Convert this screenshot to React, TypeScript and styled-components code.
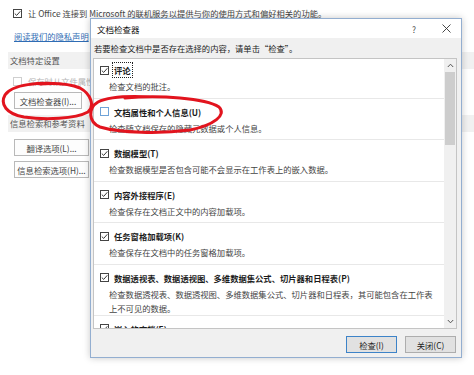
import React from 'react'
import styled, { createGlobalStyle } from 'styled-components'

const GlobalStyle = createGlobalStyle`
  html, body {
    margin: 0;
    padding: 0;
    background: #ffffff;
  }
  body {
    font-family: "Noto Sans CJK SC", "Noto Sans", sans-serif;
    font-size: 8.3px;
    color: #444;
  }
`

type InspectItem = {
  title: string
  desc: string[]
  checked: boolean
  focused?: boolean
  hover?: boolean
}

const items: InspectItem[] = [
  { title: '评论', desc: ['检查文档的批注。'], checked: true, focused: true },
  { title: '文档属性和个人信息(U)', desc: ['检查随文档保存的隐藏元数据或个人信息。'], checked: false, hover: true },
  { title: '数据模型(T)', desc: ['检查数据模型是否包含可能不会显示在工作表上的嵌入数据。'], checked: true },
  { title: '内容外接程序(E)', desc: ['检查保存在文档正文中的内容加载项。'], checked: true },
  { title: '任务窗格加载项(K)', desc: ['检查保存在文档中的任务窗格加载项。'], checked: true },
  {
    title: '数据透视表、数据透视图、多维数据集公式、切片器和日程表(P)',
    desc: ['检查数据透视表、数据透视图、多维数据集公式、切片器和日程表，其可能包含在工作表', '上不可见的数据。'],
    checked: true,
  },
  { title: '嵌入的文档(E)', desc: ['检查嵌入的文档，其中可能包含文件中不可见的信息。'], checked: true },
]

const CheckMark = () => (
  <svg width="7" height="7" viewBox="0 0 7 7">
    <path d="M0.8 3.6 L2.7 5.4 L6.3 1.3" fill="none" stroke="#222" strokeWidth="0.9" />
  </svg>
)

const App = () => {
  return (
    <>
      <GlobalStyle />
      <Page>
        <Options>
          <CheckRow>
            <Box $checked>
              <CheckMark />
            </Box>
            <span>让 Office 连接到 Microsoft 的联机服务以提供与你的使用方式和偏好相关的功能。</span>
          </CheckRow>
          <PrivacyLink>阅读我们的隐私声明</PrivacyLink>
          <SectionBand $top={10}>文档特定设置</SectionBand>
          <CheckRow $disabled>
            <Box $disabled />
            <span>保存时从文件属性中删除个人信息(R)</span>
          </CheckRow>
          <OptButton $w={68} $top={5}>文档检查器(I)...</OptButton>
          <SectionBand $top={6}>信息检索和参考资料</SectionBand>
          <OptButton $w={75} $top={7}>翻译选项(L)...</OptButton>
          <OptButton $w={75} $top={5}>信息检索选项(H)...</OptButton>
        </Options>

        <Dialog>
          <TitleBar>
            <DialogTitle>文档检查器</DialogTitle>
            <HelpGlyph>?</HelpGlyph>
            <svg width="9" height="9" viewBox="0 0 9 9">
              <path d="M0.5 0.5 L8.5 8.5 M8.5 0.5 L0.5 8.5" stroke="#333" strokeWidth="0.9" />
            </svg>
          </TitleBar>
          <Hint>若要检查文档中是否存在选择的内容，请单击“检查”。</Hint>
          <ListFrame>
            <Items>
              {items.map((it) => (
                <Item key={it.title} $lines={it.desc.length}>
                  <ItemHead>
                    <Box $checked={it.checked} $hover={it.hover}>
                      {it.checked && <CheckMark />}
                    </Box>
                    <ItemTitle $focused={it.focused}>{it.title}</ItemTitle>
                  </ItemHead>
                  <ItemDesc>
                    {it.desc.map((line) => (
                      <div key={line}>{line}</div>
                    ))}
                  </ItemDesc>
                </Item>
              ))}
            </Items>
            <ScrollBar>
              <ScrollArrow>
                <svg width="7" height="5" viewBox="0 0 7 5">
                  <path d="M0.8 4 L3.5 1.2 L6.2 4" fill="none" stroke="#555" strokeWidth="1" />
                </svg>
              </ScrollArrow>
              <Thumb />
              <Track />
              <ScrollArrow>
                <svg width="7" height="5" viewBox="0 0 7 5">
                  <path d="M0.8 1 L3.5 3.8 L6.2 1" fill="none" stroke="#555" strokeWidth="1" />
                </svg>
              </ScrollArrow>
            </ScrollBar>
          </ListFrame>
          <Footer>
            <DlgButton $primary>检查(I)</DlgButton>
            <DlgButton>关闭(C)</DlgButton>
          </Footer>
        </Dialog>

        <Marks width="474" height="375" viewBox="0 0 474 375">
          <path
            d="M62 84 C40 82 12 84 5 95 C0 104 6 114 24 117 C45 120 75 119 88 112 C95 106 91 94 80 88 C70 84 55 83 40 84"
            fill="none"
            stroke="#e2141e"
            strokeWidth="3"
            strokeLinecap="round"
          />
          <path
            d="M125 98 C160 95 205 98 219 107 C227 115 214 125 190 130 C160 134 120 133 100 127 C88 122 88 108 98 102 C108 97 130 96 150 97"
            fill="none"
            stroke="#e2141e"
            strokeWidth="3"
            strokeLinecap="round"
          />
        </Marks>
      </Page>
    </>
  )
}

export default App

const Page = styled.div`
  position: relative;
  width: 474px;
  height: 375px;
  overflow: hidden;
  background: #ffffff;
`

const Options = styled.div`
  display: flex;
  flex-direction: column;
  padding: 5px 0 0 8px;
`

const CheckRow = styled.div<{ $disabled?: boolean }>`
  display: flex;
  align-items: center;
  gap: 6px;
  height: ${(p) => (p.$disabled ? 12 : 16)}px;
  margin-top: ${(p) => (p.$disabled ? 6 : 0)}px;
  padding-left: 5px;
  white-space: nowrap;
  color: ${(p) => (p.$disabled ? '#b4b4b4' : '#444')};
`

const Box = styled.span<{ $checked?: boolean; $disabled?: boolean; $hover?: boolean }>`
  display: inline-flex;
  align-items: center;
  justify-content: center;
  box-sizing: border-box;
  flex: none;
  width: 9px;
  height: 9px;
  background: #fff;
  border: 1px solid
    ${(p) => (p.$disabled ? '#cfcfcf' : p.$hover ? '#6fa3d8' : '#444')};
`

const PrivacyLink = styled.a`
  margin-top: 9px;
  padding-left: 6px;
  line-height: 12px;
  color: #2f6cb4;
  text-decoration: underline;
  cursor: pointer;
`

const SectionBand = styled.div<{ $top: number }>`
  margin-top: ${(p) => p.$top}px;
  height: 17px;
  line-height: 17px;
  padding-left: 2px;
  background: #f1f1f1;
  color: #555;
`

const OptButton = styled.button<{ $w: number; $top: number }>`
  box-sizing: border-box;
  width: ${(p) => p.$w}px;
  height: 17px;
  margin: ${(p) => p.$top}px 0 0 6px;
  padding: 0;
  border: 1px solid #b9b9b9;
  background: #fdfdfd;
  font-family: inherit;
  font-size: 8.3px;
  color: #444;
  white-space: nowrap;
`

const Dialog = styled.div`
  position: absolute;
  left: 90px;
  top: 18px;
  width: 372px;
  height: 340px;
  box-sizing: border-box;
  display: flex;
  flex-direction: column;
  border: 1px solid #93aed0;
  background: #f0f0f0;
  box-shadow: 0 0 7px rgba(0, 0, 0, 0.22);
`

const TitleBar = styled.div`
  display: flex;
  align-items: center;
  height: 19px;
  padding: 0 10px 0 6px;
  background: #ffffff;
`

const DialogTitle = styled.div`
  flex: 1;
  font-size: 8.5px;
  color: #111;
`

const HelpGlyph = styled.span`
  margin-right: 26px;
  font-size: 8.5px;
  color: #555;
`

const Hint = styled.div`
  height: 20px;
  line-height: 20px;
  padding-left: 3px;
  color: #222;
  white-space: nowrap;
`

const ListFrame = styled.div`
  display: flex;
  height: 271px;
  margin: 0 4px 0 2px;
  box-sizing: border-box;
  border: 1px solid #c4c4c4;
  background: #ffffff;
`

const Items = styled.div`
  flex: 1;
  overflow: hidden;
`

const Item = styled.div<{ $lines: number }>`
  padding: 6px 0 ${(p) => (p.$lines > 1 ? 0 : 4.5)}px 6px;
  border-bottom: 1px solid #e8e8e8;
  &:first-child {
    padding-top: 4px;
  }
`

const ItemHead = styled.div`
  display: flex;
  align-items: center;
  gap: 5px;
  height: 14px;
`

const ItemTitle = styled.span<{ $focused?: boolean }>`
  font-weight: 700;
  line-height: 12px;
  color: #1c1c1c;
  white-space: nowrap;
  outline: ${(p) => (p.$focused ? '1px dotted #222' : 'none')};
  outline-offset: 1px;
`

const ItemDesc = styled.div`
  margin: 2px 0 0 9px;
  line-height: 14px;
  color: #444;
  white-space: nowrap;
`

const ScrollBar = styled.div`
  display: flex;
  flex-direction: column;
  width: 12px;
  background: #f0f0f0;
`

const ScrollArrow = styled.div`
  display: flex;
  align-items: center;
  justify-content: center;
  height: 13px;
`

const Thumb = styled.div`
  height: 73px;
  margin: 0 1px;
  background: #cdcdcd;
`

const Track = styled.div`
  flex: 1;
`

const Footer = styled.div`
  flex: 1;
  display: flex;
  justify-content: flex-end;
  align-items: flex-start;
  gap: 8px;
  padding: 7px 5px 0 0;
`

const DlgButton = styled.button<{ $primary?: boolean }>`
  box-sizing: border-box;
  width: 51px;
  height: 17px;
  padding: 0;
  border: 1px solid ${(p) => (p.$primary ? '#3d83c8' : '#adadad')};
  background: #e1e1e1;
  font-family: inherit;
  font-size: 8.3px;
  color: #222;
`

const Marks = styled.svg`
  position: absolute;
  left: 0;
  top: 0;
  pointer-events: none;
`
